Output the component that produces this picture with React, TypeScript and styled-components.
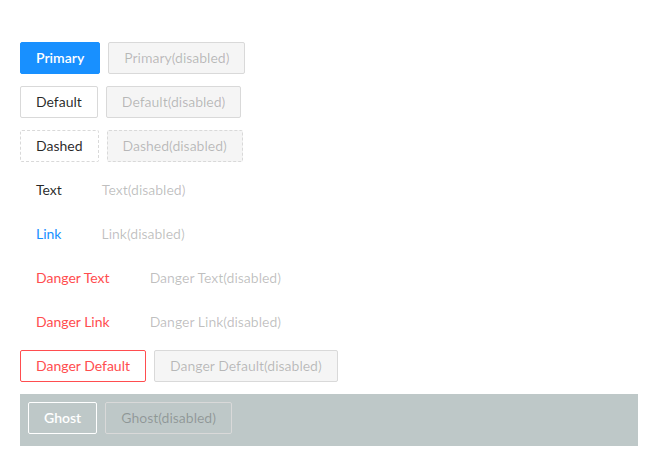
import styled, { createGlobalStyle, css } from "styled-components";

const GlobalStyle = createGlobalStyle`
  body {
    margin: 0;
    background: #fff;
    font-family: Lato, "Liberation Sans", sans-serif;
  }
`;

const Page = styled.div`
  padding: 42px 22px 0 20px;
  display: flex;
  flex-direction: column;
  gap: 12px;
`;

const Row = styled.div`
  display: flex;
  gap: 8px;
`;

const GhostRow = styled(Row)`
  background: rgb(190, 200, 200);
  padding: 8px 8px 12px;
`;

type Kind = "primary" | "default" | "dashed" | "text" | "link" | "ghost";

const Button = styled.button<{ $kind: Kind; $danger?: boolean }>`
  height: 32px;
  padding: 4px 15px;
  font-family: inherit;
  font-size: 14px;
  line-height: 22px;
  border-radius: 2px;
  border: 1px solid #d9d9d9;
  background: #fff;
  color: rgba(0, 0, 0, 0.85);
  cursor: pointer;
  white-space: nowrap;

  ${(p) =>
    p.$kind === "primary" &&
    css`
      background: #1890ff;
      border-color: #1890ff;
      color: #fff;
      font-weight: 600;
    `}
  ${(p) =>
    p.$kind === "dashed" &&
    css`
      border-style: dashed;
    `}
  ${(p) =>
    (p.$kind === "text" || p.$kind === "link") &&
    css`
      border-color: transparent;
      background: transparent;
    `}
  ${(p) =>
    p.$kind === "link" &&
    css`
      color: #1890ff;
    `}
  ${(p) =>
    p.$kind === "ghost" &&
    css`
      background: transparent;
      border-color: #fff;
      color: #fff;
      font-weight: 600;
    `}
  ${(p) =>
    p.$danger &&
    css`
      color: #ff4d4f;
      border-color: ${p.$kind === "default" ? "#ff4d4f" : "transparent"};
    `}

  &:disabled {
    cursor: not-allowed;
    color: rgba(0, 0, 0, 0.25);
    font-weight: 400;
    ${(p) =>
      p.$kind === "text" || p.$kind === "link"
        ? css`
            background: transparent;
            border-color: transparent;
          `
        : p.$kind === "ghost"
        ? css`
            background: transparent;
            border-color: #d9d9d9;
          `
        : css`
            background: #f5f5f5;
            border-color: #d9d9d9;
          `}
  }
`;

function App() {
  return (
    <>
      <GlobalStyle />
      <Page>
        <Row>
          <Button $kind="primary">Primary</Button>
          <Button $kind="primary" disabled>
            Primary(disabled)
          </Button>
        </Row>
        <Row>
          <Button $kind="default">Default</Button>
          <Button $kind="default" disabled>
            Default(disabled)
          </Button>
        </Row>
        <Row>
          <Button $kind="dashed">Dashed</Button>
          <Button $kind="dashed" disabled>
            Dashed(disabled)
          </Button>
        </Row>
        <Row>
          <Button $kind="text">Text</Button>
          <Button $kind="text" disabled>
            Text(disabled)
          </Button>
        </Row>
        <Row>
          <Button $kind="link">Link</Button>
          <Button $kind="link" disabled>
            Link(disabled)
          </Button>
        </Row>
        <Row>
          <Button $kind="text" $danger>
            Danger Text
          </Button>
          <Button $kind="text" $danger disabled>
            Danger Text(disabled)
          </Button>
        </Row>
        <Row>
          <Button $kind="link" $danger>
            Danger Link
          </Button>
          <Button $kind="link" $danger disabled>
            Danger Link(disabled)
          </Button>
        </Row>
        <Row>
          <Button $kind="default" $danger>
            Danger Default
          </Button>
          <Button $kind="default" $danger disabled>
            Danger Default(disabled)
          </Button>
        </Row>
        <GhostRow>
          <Button $kind="ghost">Ghost</Button>
          <Button $kind="ghost" disabled>
            Ghost(disabled)
          </Button>
        </GhostRow>
      </Page>
    </>
  );
}

export default App;
